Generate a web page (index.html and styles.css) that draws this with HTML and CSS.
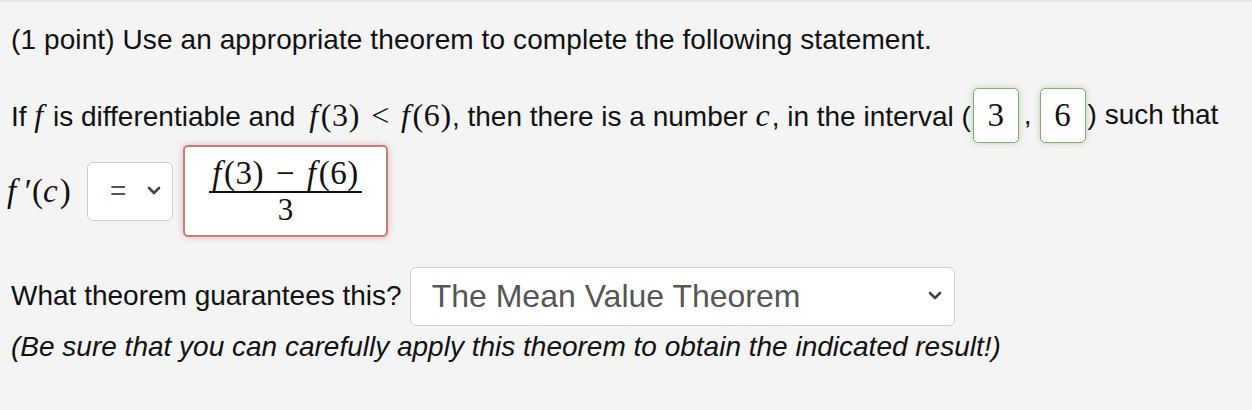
FILE: index.html
```html
<!DOCTYPE html>
<html>
<head>
<title>Theorem Question</title>
<link rel="stylesheet" href="styles.css">
</head>
<body>
<section class='problem'>
	<p class='intro'>(1 point) Use an appropriate theorem to complete the following statement.</p>

	<div class='row statement'>
		<span>If <i class='math'>f</i> is differentiable and <span class='math inline'><i>f</i>(3)<span class='rel'>&lt;</span><i>f</i>(6)</span>, then there is a number <i class='math'>c</i>, in the interval (</span>
		<span class='ans-box correct'>3</span>
		<span class='comma'>,</span>
		<span class='ans-box correct'>6</span>
		<span>) such that</span>
	</div>

	<div class='row equation'>
		<span class='math fprime'><i>f</i>&thinsp;′(<i>c</i>)</span>
		<div class='pick pick-small'>
			<span class='pick-value'>=</span>
			<svg class='chevron' width='14' height='10' viewBox='0 0 14 10'><path d='M2 2 L7 7 L12 2' fill='none' stroke='#444' stroke-width='2.6' stroke-linecap='round' stroke-linejoin='round'/></svg>
		</div>
		<div class='ans-box wrong'>
			<div class='frac'>
				<span class='num math'><i>f</i>(3)<span class='bin'>−</span><i>f</i>(6)</span>
				<span class='den math'>3</span>
			</div>
		</div>
	</div>

	<div class='row question'>
		<span>What theorem guarantees this?</span>
		<div class='pick pick-wide'>
			<span class='pick-value'>The Mean Value Theorem</span>
			<svg class='chevron' width='14' height='10' viewBox='0 0 14 10'><path d='M2 2 L7 7 L12 2' fill='none' stroke='#444' stroke-width='2.6' stroke-linecap='round' stroke-linejoin='round'/></svg>
		</div>
	</div>

	<p class='note'>(Be sure that you can carefully apply this theorem to obtain the indicated result!)</p>
</section>
</body>
</html>
```

FILE: styles.css
```css
html, body {
	margin: 0;
	background: #f4f4f4;
}

body {
	font-family: "Liberation Sans", Arial, sans-serif;
	font-size: 28px;
	color: #111;
	box-shadow: inset 0 3px 3px -2px #d8d8d8;
	height: 410px;
}

.problem {
	padding: 23px 0 0 11px;
}

.intro {
	margin: 0;
	line-height: 34px;
	letter-spacing: 0.1px;
}

.row {
	display: flex;
	align-items: center;
}

.math {
	font-family: "Liberation Serif", "Times New Roman", serif;
	font-size: 32px;
}

.math i, i.math {
	font-style: italic;
	padding-right: 2px;
}

.inline {
	margin-left: 6px;
	letter-spacing: 0.7px;
}

.rel {
	margin: 0 11px;
}

.bin {
	margin: 0 12px;
}

.statement {
	margin-top: 30px;
	height: 56px;
	white-space: pre;
}

.ans-box {
	background: #fff;
	border-radius: 5px;
	display: flex;
	align-items: center;
	justify-content: center;
}

.correct {
	width: 44px;
	height: 53px;
	border: 1.5px solid #85ad78;
	box-shadow: 0 0 6px rgba(120, 170, 100, 0.45);
	font-family: "Liberation Serif", "Times New Roman", serif;
	font-size: 33px;
	margin: 0 2px;
}

.comma {
	margin: 0 6px 0 3px;
}

.equation {
	margin-top: 2px;
	height: 92px;
	margin-left: -4px;
}

.fprime {
	width: 80px;
	font-size: 33px;
}

.pick {
	background: #fff;
	border: 1.5px solid #cfcfcf;
	border-radius: 6px;
	display: flex;
	align-items: center;
	justify-content: space-between;
	box-sizing: border-box;
}

.pick-small {
	width: 86px;
	height: 59px;
	padding: 0 11px 0 22px;
	color: #555;
	font-size: 28px;
}

.wrong {
	margin-left: 10px;
	width: 201px;
	height: 88px;
	border: 2px solid #c87b7b;
	box-shadow: 0 0 7px rgba(200, 110, 110, 0.45);
}

.frac {
	display: flex;
	flex-direction: column;
	align-items: center;
}

.num {
	font-size: 33px;
	padding: 0 3px 1px;
	border-bottom: 2px solid #111;
	line-height: 33px;
	letter-spacing: 0.5px;
}

.den {
	font-size: 31px;
	line-height: 32px;
	padding-top: 1px;
}

.question {
	margin-top: 30px;
	height: 58px;
}

.pick-wide {
	margin-left: 8px;
	width: 545px;
	height: 59px;
	padding: 0 12px 0 21px;
	color: #555;
	font-size: 32px;
}

.note {
	margin: 5px 0 0;
	line-height: 34px;
	font-style: italic;
}
```
